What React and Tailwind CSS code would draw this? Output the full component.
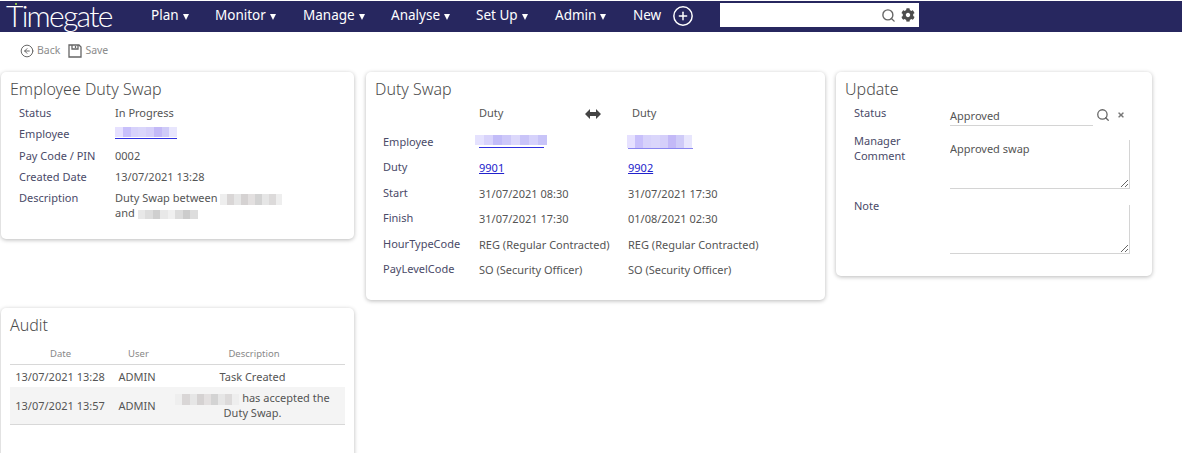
import React from "react";
import { CircleArrowLeft, CirclePlus, Search } from "lucide-react";
import { FaCog, FaTimes } from "react-icons/fa";

const font = { fontFamily: "'Noto Sans', 'Open Sans', sans-serif" };

const menu = [
  { label: "Plan", w: "w-[64px]" },
  { label: "Monitor", w: "w-[88px]" },
  { label: "Manage", w: "w-[88px]" },
  { label: "Analyse", w: "w-[85px]" },
  { label: "Set Up", w: "w-[79px]" },
  { label: "Admin", w: "w-[78px]" },
];

// pixelated names in the reference
const Mosaic = ({ cells, className = "" }) => (
  <span className={className}>
    {cells.map((c, i) => (
      <span key={i} className="h-full flex-1" style={{ backgroundColor: c }} />
    ))}
  </span>
);

const grey1 = ["#eeeeee", "#d9d6d6", "#e6e6e6", "#d5d2d2", "#e3e0e0", "#d3d3d3", "#e6e6e6", "#dcdada", "#eeeeee"];
const grey2 = ["#e8e8e8", "#dddddd", "#cfcfcf", "#e8e8e8", "#f0f0f0", "#dcdcdc", "#cccccc", "#dddddd"];
const blue1 = ["#e6e1ff", "#c8c0fb", "#d7d2fb", "#dad6fb", "#d5cffa", "#c3b9f7", "#cfcbf8", "#e8e6fd"];
const blue2 = ["#e5e2fe", "#d8d3fb", "#c2bcf8", "#cdc8f9", "#dcd8fb", "#c9c4f8", "#d6d2fb", "#c8c4f8"];

const Card = ({ title, className = "", children }) => (
  <div className={`bg-white rounded-[5px] shadow-[0_1px_4px_rgba(0,0,0,0.28)] ${className}`}>
    <h2 className="text-[16px] leading-[24px] text-[#4d4d4d] font-light">{title}</h2>
    {children}
  </div>
);

const Row = ({ label, children }) => (
  <div className="flex min-h-[21.25px] leading-[16px] items-start">
    <div className="w-[96px] text-[#4a4a68]">{label}</div>
    <div className="text-[#555555]">{children}</div>
  </div>
);

const SwapRow = ({ label, a, b }) => (
  <div className="grid grid-cols-[96px_149px_1fr] h-[25.5px] items-start">
    <div className="text-[#4a4a68] leading-[16px]">{label}</div>
    <div className="pt-[1px] leading-[16px] text-[#555555]">{a}</div>
    <div className="pt-[1px] leading-[16px] text-[#555555]">{b}</div>
  </div>
);

const DutyLink = ({ children }) => <a className="text-[#2222cc] underline">{children}</a>;

const App = () => {
  return (
    <div className="w-[1182px] h-[453px] overflow-hidden bg-white text-[11px]" style={font}>
      <div className="h-[32px] bg-[#27275f] flex items-center text-white border-t border-white">
        <div className="relative w-[151px] pl-[6px] text-[30px] leading-[31px] tracking-[-1.7px] font-light -mt-[3px]" style={{ fontFamily: "Lato, sans-serif" }}>
          Timegate
          <span className="absolute left-[15px] top-[3px] w-[2px] h-[2px] bg-[#8fbf4a]" />
        </div>
        {menu.map((m) => (
          <div key={m.label} className={`${m.w} text-[13.5px] flex items-center gap-[4px] -mt-[2px]`}>
            {m.label}
            <span className="w-0 h-0 mt-[2px] border-l-[3.5px] border-r-[3.5px] border-t-[6px] border-l-transparent border-r-transparent border-t-white" />
          </div>
        ))}
        <div className="text-[13.5px] -mt-[2px]">New</div>
        <CirclePlus className="w-[22px] h-[22px] ml-[11px] -mt-[2px]" strokeWidth={1.6} />
        <div className="ml-[26px] w-[199px] h-[24px] -mt-[3px] bg-white flex items-center justify-end gap-[5px] pr-[4px]">
          <Search className="w-[15px] h-[15px] text-[#666666]" strokeWidth={2.2} />
          <FaCog className="w-[14px] h-[14px] text-[#4d4d4d]" />
        </div>
      </div>

      <div className="h-[40px] pl-[20px] pb-[2px] flex items-center gap-[8px] text-[#8c8c8c] text-[10.5px]">
        <div className="flex items-center gap-[3px]">
          <CircleArrowLeft className="w-[14px] h-[14px] text-[#666666]" strokeWidth={1.7} />
          Back
        </div>
        <div className="flex items-center gap-[3px]">
          <svg viewBox="0 0 14 14" className="w-[14px] h-[14px]" fill="none" stroke="#666666" strokeWidth="1.3">
            <path d="M1 1h10l2 2v10H1z" />
            <path d="M4 1v4h6V1" />
            <path d="M7.5 2v2" />
          </svg>
          Save
        </div>
      </div>

      <div className="flex items-start pl-[1px]">
        <div className="w-[353px] flex flex-col gap-[69px]">
          <Card title="Employee Duty Swap" className="h-[167px] pl-[9px] pt-[5px]">
            <div className="pl-[9px] pt-[4px]">
              <Row label="Status">In Progress</Row>
              <Row label="Employee">
                <a className="block w-[62px] h-[13px] pt-[1px] border-b border-[#3030e0]">
                  <Mosaic cells={blue1} className="flex w-[62px] h-[10px]" />
                </a>
              </Row>
              <Row label="Pay Code / PIN">0002</Row>
              <Row label="Created Date">13/07/2021 13:28</Row>
              <Row label="Description">
                <div className="leading-[15px]">
                  Duty Swap between <Mosaic cells={grey1} className="inline-flex align-middle w-[62px] h-[11px]" />
                  <br />
                  and <Mosaic cells={grey2} className="inline-flex align-middle w-[60px] h-[9px]" />
                </div>
              </Row>
            </div>
          </Card>

          <Card title="Audit" className="h-[160px] pl-[9px] pr-[9px] pt-[5px]">
            <table className="w-full mt-[5px] border-collapse table-fixed">
              <thead>
                <tr className="border-b border-[#d8d8d8] text-[9.5px] text-[#888888] h-[22px]">
                  <th className="font-normal w-[104px] pt-[3px] pr-[3px]">Date</th>
                  <th className="font-normal w-[46px] pt-[3px] pl-[3px]">User</th>
                  <th className="font-normal pt-[3px] pl-[3px]">Description</th>
                </tr>
              </thead>
              <tbody className="text-[#555555]">
                <tr className="h-[23px]">
                  <td className="text-center pt-[2px] pr-[4px]">13/07/2021 13:28</td>
                  <td className="text-center pt-[2px]">ADMIN</td>
                  <td className="text-center pt-[2px]">Task Created</td>
                </tr>
                <tr className="h-[37px] bg-[#f4f4f4] border-b border-[#d8d8d8] leading-[15px]">
                  <td className="text-center pr-[4px]">13/07/2021 13:57</td>
                  <td className="text-center">ADMIN</td>
                  <td className="text-center">
                    <Mosaic cells={grey1} className="inline-flex align-middle w-[64px] h-[11px]" /> has accepted the
                    <br />
                    Duty Swap.
                  </td>
                </tr>
              </tbody>
            </table>
          </Card>
        </div>

        <Card title="Duty Swap" className="ml-[12px] w-[459px] h-[228px] pl-[9px] pt-[5px]">
          <div className="pl-[8px]">
            <div className="grid grid-cols-[96px_153px_1fr] h-[32.5px] pt-[4px] text-[#555555]">
              <div />
              <div className="relative">
                Duty
                <svg viewBox="0 0 16 10" className="absolute left-[106px] top-[4px] w-[16px] h-[10px]" fill="#444444">
                  <polygon points="0,5 5,0 5,3 11,3 11,0 16,5 11,10 11,7 5,7 5,10" />
                </svg>
              </div>
              <div>Duty</div>
            </div>
            <SwapRow
              label="Employee"
              a={
                <a className="block w-[65px] h-[13px] border-b border-[#3030e0]">
                  <Mosaic cells={blue2} className="flex w-[72px] h-[10px] -ml-[4px]" />
                </a>
              }
              b={
                <a className="block w-[65px] h-[14px] border-b border-[#8a86f0]">
                  <Mosaic cells={blue1} className="flex w-[65px] h-[13px] -ml-[1px]" />
                </a>
              }
            />
            <SwapRow label="Duty" a={<DutyLink>9901</DutyLink>} b={<DutyLink>9902</DutyLink>} />
            <SwapRow label="Start" a="31/07/2021 08:30" b="31/07/2021 17:30" />
            <SwapRow label="Finish" a="31/07/2021 17:30" b="01/08/2021 02:30" />
            <SwapRow label="HourTypeCode" a="REG (Regular Contracted)" b="REG (Regular Contracted)" />
            <SwapRow label="PayLevelCode" a="SO (Security Officer)" b="SO (Security Officer)" />
          </div>
        </Card>

        <Card title="Update" className="ml-[11px] w-[316px] h-[204px] pl-[9px] pt-[5px]">
          <div className="pl-[9px] pt-[4px] text-[#555555]">
            <div className="flex h-[29px]">
              <div className="w-[96px] text-[#4a4a68] leading-[16px]">Status</div>
              <div className="w-[143px] h-[20px] mt-[1px] border-b border-[#d4d4d4] leading-[20px]">Approved</div>
              <Search className="w-[14px] h-[14px] ml-[3px] mt-[3px] text-[#666666]" strokeWidth={2.2} />
              <FaTimes className="w-[8px] h-[8px] ml-[7px] mt-[6px] text-[#777777]" />
            </div>
            <div className="flex h-[65px]">
              <div className="w-[96px] text-[#4a4a68] leading-[15px] -mt-[1px]">
                Manager
                <br />
                Comment
              </div>
              <textarea
                readOnly
                value="Approved swap"
                className="w-[180px] h-[49px] mt-[6px] border-r border-b border-[#d4d4d4] outline-none leading-[16px] pt-[1px] text-[#555555]"
              />
            </div>
            <div className="flex">
              <div className="w-[96px] text-[#4a4a68] leading-[15px] -mt-[1px]">Note</div>
              <textarea readOnly className="w-[180px] h-[49px] mt-[6px] border-r border-b border-[#d4d4d4] outline-none" />
            </div>
          </div>
        </Card>
      </div>
    </div>
  );
};

export default App;
